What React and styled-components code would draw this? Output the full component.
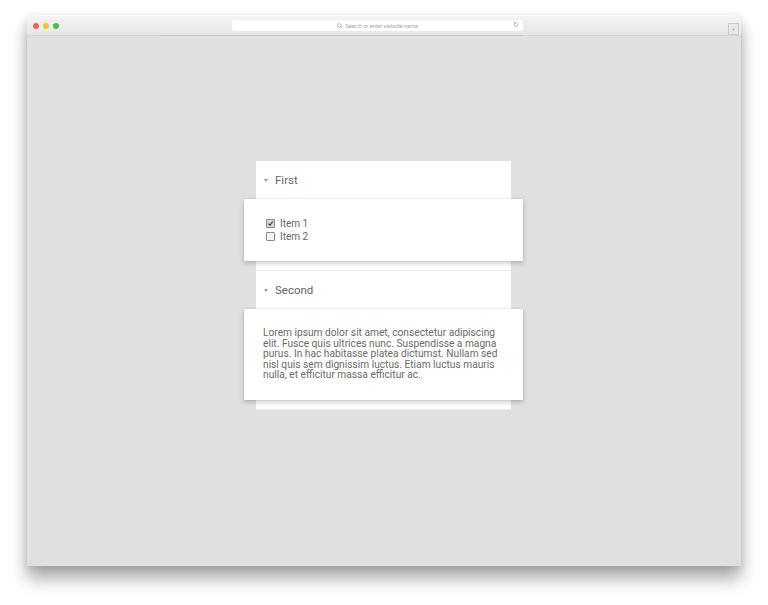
import React, { useState } from "react";
import styled, { createGlobalStyle } from "styled-components";

const GlobalStyle = createGlobalStyle`
  html, body {
    margin: 0;
    padding: 0;
    background: #fff;
    font-family: Roboto, "Liberation Sans", Arial, sans-serif;
  }
`;

const Page = styled.div`
  width: 768px;
  height: 605px;
  padding: 15px 0 0 27px;
  box-sizing: border-box;
  overflow: hidden;
`;

const Window = styled.div`
  width: 714px;
  height: 551px;
  display: flex;
  flex-direction: column;
  background: #e0e0e0;
  box-shadow: 0 13px 16px rgba(0, 0, 0, 0.32), 0 2px 8px rgba(0, 0, 0, 0.12);
`;

const TitleBar = styled.div`
  height: 19px;
  display: flex;
  align-items: center;
  padding: 0 2px 0 6px;
  background: linear-gradient(#f4f4f4, #e6e6e6);
  border-top: 1px solid #fafafa;
  border-bottom: 1px solid #d6d6d6;
  position: relative;
`;

const Lights = styled.div`
  display: flex;
  gap: 4px;
  width: 199px;
`;

const Light = styled.span`
  width: 6px;
  height: 6px;
  border-radius: 50%;
  background: ${(p) => p.color};
`;

const UrlBar = styled.div`
  width: 291px;
  height: 11px;
  background: #fff;
  border-radius: 2px;
  display: flex;
  align-items: center;
  justify-content: center;
  position: relative;
  font-size: 5.5px;
  color: #a8a8a8;
  gap: 2px;
`;

const Reload = styled.span`
  position: absolute;
  right: 4px;
  top: 1px;
  font-size: 7px;
  color: #999;
`;

const Spacer = styled.div`
  flex: 1;
`;

const SideButton = styled.div`
  width: 9px;
  height: 10px;
  margin-top: 6px;
  border: 1px solid #c9c9c9;
  background: #e9e9e9;
  display: flex;
  align-items: center;
  justify-content: center;
  font-size: 5px;
  color: #999;
`;

const TabLine = styled.div`
  position: absolute;
  left: 133px;
  bottom: -1px;
  width: 362px;
  height: 1px;
  background: #c4c4c4;
`;

const Content = styled.div`
  flex: 1;
  display: flex;
  justify-content: center;
  padding: 125px 1px 0 0;
`;

const Accordion = styled.div`
  width: 255px;
  display: flex;
  flex-direction: column;
`;

const Item = styled.div`
  background: #fff;
  border-bottom: 1px solid #ececec;
  display: flex;
  flex-direction: column;
  padding-bottom: ${(p) => (p.open ? "9px" : "0")};
`;

const Header = styled.button`
  height: 37px;
  border: none;
  background: #fff;
  display: flex;
  align-items: center;
  gap: 7px;
  padding: 0 0 0 8px;
  font-family: inherit;
  font-size: 11.5px;
  color: #666;
  cursor: pointer;
  text-align: left;
`;

const Caret = styled.span`
  width: 0;
  height: 0;
  border-left: 2.5px solid transparent;
  border-right: 2.5px solid transparent;
  border-top: 3px solid #999;
  margin-top: 1px;
`;

const Body = styled.div`
  margin: 1px -12px 0;
  background: #fff;
  box-shadow: 0 2px 5px rgba(0, 0, 0, 0.22), 0 0 2px rgba(0, 0, 0, 0.08);
  padding: ${(p) => p.pad};
  font-size: 10.2px;
  color: #6a6a6a;
  position: relative;
`;

const Check = styled.label`
  display: flex;
  align-items: center;
  gap: 5px;
  height: 13px;
  font-size: 10px;
  color: #666;
`;

const Box = styled.span`
  width: 7px;
  height: 7px;
  border: 1px solid #8a8a8a;
  border-radius: 1px;
  background: ${(p) => (p.checked ? "#d8d8d8" : "#f4f4f4")};
  display: flex;
  align-items: center;
  justify-content: center;
`;

const Text = styled.p`
  margin: 0;
  line-height: 10.6px;
`;

const Tick = () => (
  <svg width="7" height="7" viewBox="0 0 10 10">
    <path d="M2 5.2 L4.2 7.5 L8.2 2.2" fill="none" stroke="#333" strokeWidth="1.6" />
  </svg>
);

export default function App() {
  const [items, setItems] = useState([true, false]);

  const toggle = (i) => setItems(items.map((v, k) => (k === i ? !v : v)));

  return (
    <>
      <GlobalStyle />
      <Page>
        <Window>
          <TitleBar>
            <Lights>
              <Light color="#f2625b" />
              <Light color="#f5c23a" />
              <Light color="#3ec445" />
            </Lights>
            <UrlBar>
              <svg width="6" height="6" viewBox="0 0 10 10">
                <circle cx="4" cy="4" r="3" fill="none" stroke="#999" strokeWidth="1.2" />
                <path d="M6.2 6.2 L9 9" stroke="#999" strokeWidth="1.2" />
              </svg>
              Search or enter website name
              <Reload>↻</Reload>
            </UrlBar>
            <Spacer />
            <SideButton>+</SideButton>
            <TabLine />
          </TitleBar>
          <Content>
            <Accordion>
              <Item open>
                <Header>
                  <Caret />
                  First
                </Header>
                <Body pad="18px 22px 18px">
                  {["Item 1", "Item 2"].map((label, i) => (
                    <Check key={label} onClick={() => toggle(i)}>
                      <Box checked={items[i]}>{items[i] && <Tick />}</Box>
                      {label}
                    </Check>
                  ))}
                </Body>
              </Item>
              <Item open>
                <Header>
                  <Caret />
                  Second
                </Header>
                <Body pad="19px 19px 19px">
                  <Text>
                    Lorem ipsum dolor sit amet, consectetur adipiscing elit. Fusce quis ultrices
                    nunc. Suspendisse a magna purus. In hac habitasse platea dictumst. Nullam sed
                    nisl quis sem dignissim luctus. Etiam luctus mauris nulla, et efficitur massa
                    efficitur ac.
                  </Text>
                </Body>
              </Item>
            </Accordion>
          </Content>
        </Window>
      </Page>
    </>
  );
}
